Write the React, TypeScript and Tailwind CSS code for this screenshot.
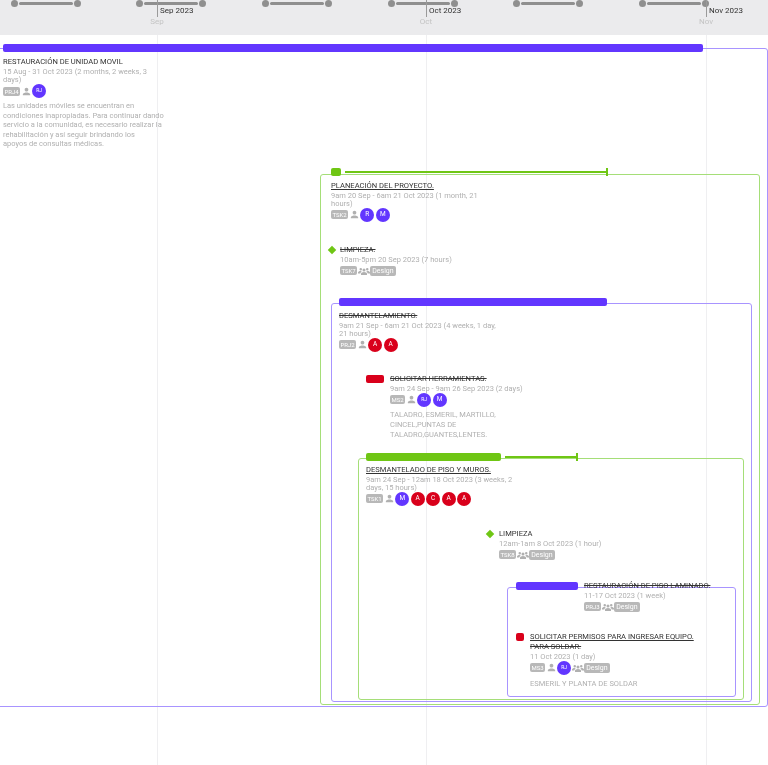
import React from 'react';

const PERSON = 'M12 12c2.21 0 4-1.79 4-4s-1.79-4-4-4-4 1.79-4 4 1.79 4 4 4zm0 2c-2.67 0-8 1.34-8 4v2h16v-2c0-2.66-5.33-4-8-4z';
const GROUP = 'M12 7a3 3 0 100 6 3 3 0 000-6zM5.5 6a2.5 2.5 0 100 5 2.5 2.5 0 000-5zm13 0a2.5 2.5 0 100 5 2.5 2.5 0 000-5zM12 14c-3 0-6 1.5-6 3.5V20h12v-2.5c0-2-3-3.5-6-3.5zM5 12c-2.5 0-5 1.2-5 3v2h4.5c.2-1.7 1.3-3 3-3.7-.7-.8-1.5-1.3-2.5-1.3zm14 0c-1 0-1.8.5-2.5 1.3 1.7.7 2.8 2 3 3.7H24v-2c0-1.8-2.5-3-5-3z';

const STRIKE = 'line-through';
const UNDER = 'underline underline-offset-[1px]';

function Icon({ d, size = 11 }: { d: string; size?: number }) {
  return (
    <svg width={size} height={size} viewBox="0 0 24 24" fill="#b0b0b0" className="shrink-0">
      <path d={d} />
    </svg>
  );
}

function Tag({ children, big }: { children: React.ReactNode; big?: boolean }) {
  return (
    <span className={`rounded-[2px] bg-[#b8b8b8] text-white ${big ? 'mt-[1px] px-[2px] text-[7px] leading-[10px]' : 'px-[1.5px] text-[6px] leading-[9px]'}`}>
      {children}
    </span>
  );
}

function Avatar({ label, red }: { label: string; red?: boolean }) {
  return (
    <span
      className={`flex h-[14px] w-[14px] items-center justify-center rounded-full text-white ${label.length > 1 ? 'text-[5px]' : 'text-[6.5px]'} ${red ? 'bg-[#d9001b]' : 'bg-[#6236ff]'}`}
    >
      {label}
    </span>
  );
}

type CardProps = {
  className?: string;
  title: React.ReactNode;
  line?: string;
  date: string;
  tag: string;
  people?: { label: string; red?: boolean }[];
  team?: boolean;
  desc?: string;
  descClass?: string;
};

function Card({ className = 'w-[160px]', title, line = STRIKE, date, tag, people, team, desc, descClass = 'mt-[3px] leading-[9.6px]' }: CardProps) {
  return (
    <div className={className}>
      <div className={`text-[7.6px] leading-[10px] text-[#333] ${line}`}>{title}</div>
      <div className="mt-[1px] text-[7.5px] leading-[8px] text-[#b0b0b0]">{date}</div>
      <div className="flex h-[14px] items-center gap-[0.5px]">
        <Tag>{tag}</Tag>
        {people && <Icon d={PERSON} />}
        {people && (
          <div className="flex gap-[1.5px]">
            {people.map((p, i) => (
              <Avatar key={i} label={p.label} red={p.red} />
            ))}
          </div>
        )}
        {team && <Icon d={GROUP} size={12} />}
        {team && <Tag big>Design</Tag>}
      </div>
      {desc && <div className={`whitespace-pre-line text-[7.5px] text-[#b0b0b0] ${descClass}`}>{desc}</div>}
    </div>
  );
}

function GreenLine({ className }: { className: string }) {
  return (
    <div className={`flex items-center ${className}`}>
      <div className="h-[2px] flex-1 bg-[#6fc614]" />
      <div className="h-[8px] w-[2px] bg-[#6fc614]" />
    </div>
  );
}

function Diamond() {
  return <div className="mt-[2px] h-[6px] w-[6px] shrink-0 rotate-45 bg-[#6fc614]" />;
}

const sliders = [0, 1, 2, 3, 4, 5];

const months = [
  { full: 'Sep 2023', short: 'Sep', width: 'w-[269px]' },
  { full: 'Oct 2023', short: 'Oct', width: 'w-[280px]' },
  { full: 'Nov 2023', short: 'Nov', width: 'w-[62px]' },
];

export default function App() {
  return (
    <div className="relative h-[765px] w-[768px] overflow-hidden bg-white font-['Roboto',sans-serif] blur-[0.35px]">
      {/* Líneas de mes, detrás de todo */}
      <div className="absolute inset-0 flex pl-[157px]">
        {months.map((m) => (
          <div key={m.short} className={`${m.width} border-l border-[#efeff1]`} />
        ))}
      </div>

      {/* Cabecera */}
      <div className="relative h-[35px] bg-[#ebebed]">
        <div className="flex gap-[55.7px] pl-[10.5px]">
          {sliders.map((s) => (
            <div key={s} className="flex h-[7px] w-[70px] items-center">
              <span className="h-[7px] w-[7px] rounded-full bg-[#8f8f8f]" />
              <span className="mx-[1px] h-[3px] flex-1 rounded bg-[#8f8f8f]" />
              <span className="h-[7px] w-[7px] rounded-full bg-[#8f8f8f]" />
            </div>
          ))}
        </div>
        <div className="absolute inset-0 flex pl-[157px]">
          {months.map((m) => (
            <div key={m.short} className={`${m.width} relative`}>
              <div className="h-[17px] border-l border-[#9a9a9a] pt-[6px] pl-[2px] text-[8px] leading-[10px] text-[#333]">{m.full}</div>
              <span className="absolute top-[17px] left-0 -translate-x-1/2 text-[8px] leading-[10px] text-[#c4c4c4]">{m.short}</span>
            </div>
          ))}
        </div>
      </div>

      {/* Proyecto */}
      <div className="relative mt-[13px] -ml-[10px] w-[778px] rounded-[3px] border border-[#a894ff] pb-[1px] pl-[12px]">
        <div className="-mt-[5px] h-[8px] w-[700px] rounded-[2px] bg-[#6236ff]" />
        <Card
          className="mt-[5px] w-[163px]"
          title="RESTAURACIÓN DE UNIDAD MOVIL"
          line=""
          date="15 Aug - 31 Oct 2023 (2 months, 2 weeks, 3 days)"
          tag="PRJ4"
          people={[{ label: 'RJ' }]}
          desc={'Las unidades móviles se encuentran en condiciones inapropiadas. Para continuar dando servicio a la comunidad, es necesario realizar la rehabilitación y así seguir brindando los\napoyos de consultas médicas.'}
        />

        {/* Planeación */}
        <div className="mt-[25px] ml-[317px] w-[440px] rounded-[3px] border border-[#a5de78] pb-[2px] pl-[10px]">
          <div className="-mt-[7px] flex items-center gap-[4px]">
            <div className="h-[8px] w-[10px] rounded-[2px] bg-[#6fc614]" />
            <GreenLine className="w-[263px]" />
          </div>
          <Card
            className="mt-[5px] w-[155px]"
            title="PLANEACIÓN DEL PROYECTO."
            line={UNDER}
            date="9am 20 Sep - 6am 21 Oct 2023 (1 month, 21 hours)"
            tag="TSK2"
            people={[{ label: 'R' }, { label: 'M' }]}
          />
          <div className="mt-[23px] -ml-[2px] flex gap-[5px]">
            <Diamond />
            <Card title="LIMPIEZA." date="10am-5pm 20 Sep 2023 (7 hours)" tag="TSK7" team />
          </div>

          {/* Desmantelamiento */}
          <div className="mt-[25px] w-[421px] rounded-[3px] border border-[#a894ff] pb-[1px] pl-[7px]">
            <div className="-mt-[6px] h-[8px] w-[268px] rounded-[2px] bg-[#6236ff]" />
            <Card
              className="mt-[5px] w-[160px]"
              title="DESMANTELAMIENTO."
              date="9am 21 Sep - 6am 21 Oct 2023 (4 weeks, 1 day, 21 hours)"
              tag="PRJ2"
              people={[{ label: 'A', red: true }, { label: 'A', red: true }]}
            />
            <div className="mt-[22px] ml-[27px] flex gap-[6px]">
              <div className="mt-[1px] h-[8px] w-[18px] shrink-0 rounded-[2px] bg-[#d9001b]" />
              <Card
                title="SOLICITAR HERRAMIENTAS."
                date="9am 24 Sep - 9am 26 Sep 2023 (2 days)"
                tag="MS2"
                people={[{ label: 'RJ' }, { label: 'M' }]}
                descClass="mt-[3px] w-[112px] leading-[10px]"
                desc="TALADRO, ESMERIL, MARTILLO, CINCEL,PUNTAS DE TALADRO,GUANTES,LENTES."
              />
            </div>

            {/* Desmantelado */}
            <div className="mt-[18px] ml-[19px] w-[386px] rounded-[3px] border border-[#a5de78] pb-[2px] pl-[7px]">
              <div className="-mt-[6px] flex items-center gap-[4px]">
                <div className="h-[8px] w-[135px] rounded-[2px] bg-[#6fc614]" />
                <GreenLine className="w-[73px]" />
              </div>
              <Card
                className="mt-[4px] w-[150px]"
                title="DESMANTELADO DE PISO Y MUROS."
                line={UNDER}
                date="9am 24 Sep - 12am 18 Oct 2023 (3 weeks, 2 days, 15 hours)"
                tag="TSK1"
                people={[
                  { label: 'M' },
                  { label: 'A', red: true },
                  { label: 'C', red: true },
                  { label: 'A', red: true },
                  { label: 'A', red: true },
                ]}
              />
              <div className="mt-[23px] ml-[121px] flex gap-[6px]">
                <Diamond />
                <Card title="LIMPIEZA" line="" date="12am-1am 8 Oct 2023 (1 hour)" tag="TSK8" team />
              </div>

              {/* Restauración de piso */}
              <div className="mt-[25px] ml-[141px] w-[229px] rounded-[3px] border border-[#a894ff] pb-[7px] pl-[8px]">
                <div className="-mt-[7px] flex gap-[6px]">
                  <div className="mt-[1px] h-[8px] w-[62px] shrink-0 rounded-[2px] bg-[#6236ff]" />
                  <Card className="w-[150px]" title="RESTAURACIÓN DE PISO LAMINADO." date="11-17 Oct 2023 (1 week)" tag="PRJ3" team />
                </div>
                <div className="mt-[18px] flex gap-[6px]">
                  <div className="mt-[1px] h-[8px] w-[8px] shrink-0 rounded-[2px] bg-[#d9001b]" />
                  <Card
                    className="w-[170px]"
                    line=""
                    title={
                      <>
                        <span className={`block whitespace-nowrap ${UNDER}`}>SOLICITAR PERMISOS PARA INGRESAR EQUIPO.</span>
                        <span className={`block ${STRIKE}`}>PARA SOLDAR.</span>
                      </>
                    }
                    date="11 Oct 2023 (1 day)"
                    tag="MS3"
                    people={[{ label: 'RJ' }]}
                    team
                    descClass="mt-[4px] leading-[10px]"
                    desc="ESMERIL Y PLANTA DE SOLDAR"
                  />
                </div>
              </div>
            </div>
          </div>
        </div>
      </div>
    </div>
  );
}
